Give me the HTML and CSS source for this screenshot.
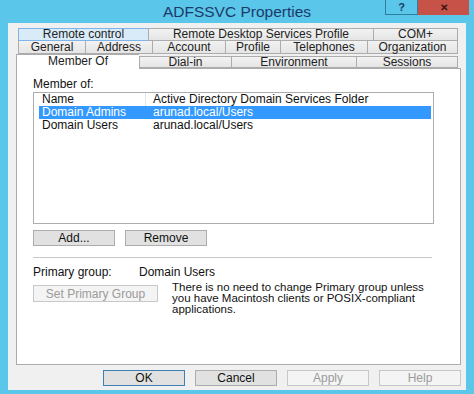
FILE: index.html
```html
<!DOCTYPE html>
<html lang="en">

<head>
  <meta charset="UTF-8">
  <title>ADFSSVC Properties</title>
  <link rel="stylesheet" href="styles.css">
</head>

<body>
  <div class="window">
    <div class="titlebar">
      <span></span>
      <h1 class="title">ADFSSVC Properties</h1>
      <div class="caption-buttons">
        <span class="cap-help">?</span>
        <span class="cap-close">&#x2715;</span>
      </div>
    </div>

    <div class="client">
      <div class="tabs">
        <div class="tab-row row1">
          <div class="tab hover">Remote control</div>
          <div class="tab">Remote Desktop Services Profile</div>
          <div class="tab">COM+</div>
        </div>
        <div class="tab-row row2">
          <div class="tab">General</div>
          <div class="tab">Address</div>
          <div class="tab">Account</div>
          <div class="tab">Profile</div>
          <div class="tab">Telephones</div>
          <div class="tab">Organization</div>
        </div>
        <div class="tab-row row3">
          <div class="tab active">Member Of</div>
          <div class="tab">Dial-in</div>
          <div class="tab">Environment</div>
          <div class="tab">Sessions</div>
        </div>
      </div>

      <div class="panel">
        <div class="label">Member of:</div>
        <div class="listview">
          <div class="lv-row lv-header">
            <div class="col-name">Name</div>
            <div class="col-folder">Active Directory Domain Services Folder</div>
          </div>
          <div class="lv-row selected">
            <div class="col-name">Domain Admins</div>
            <div class="col-folder">arunad.local/Users</div>
          </div>
          <div class="lv-row">
            <div class="col-name">Domain Users</div>
            <div class="col-folder">arunad.local/Users</div>
          </div>
        </div>

        <div class="list-buttons">
          <button class="btn">Add...</button>
          <button class="btn">Remove</button>
        </div>

        <hr class="sep">

        <div class="primary">
          <span class="primary-label">Primary group:</span>
          <span>Domain Users</span>
        </div>

        <div class="primary-set">
          <button class="btn disabled wide">Set Primary Group</button>
          <p class="note">There is no need to change Primary group unless you have Macintosh clients or POSIX-compliant applications.</p>
        </div>
      </div>

      <div class="dialog-buttons">
        <button class="btn default">OK</button>
        <button class="btn">Cancel</button>
        <button class="btn disabled">Apply</button>
        <button class="btn disabled">Help</button>
      </div>
    </div>
  </div>
</body>

</html>
```

FILE: styles.css
```css
body {
  margin: 0;
  font-family: "Liberation Sans", Arial, sans-serif;
  font-size: 12px;
  color: #111;
}

.window {
  width: 474px;
  height: 394px;
  background-color: #5ac6ea;
  display: flex;
  flex-direction: column;
  box-sizing: border-box;
}

.titlebar {
  height: 23px;
  display: grid;
  grid-template-columns: 1fr auto 1fr;
  align-items: start;
}

.title {
  margin: 0;
  padding-top: 3px;
  font-size: 15.5px;
  font-weight: normal;
  color: #1c3a68;
  line-height: 17px;
}

.caption-buttons {
  justify-self: end;
  display: flex;
  margin-right: 5px;
}

.cap-help,
.cap-close {
  height: 15px;
  display: flex;
  align-items: center;
  justify-content: center;
  font-weight: bold;
  box-sizing: border-box;
}

.cap-help {
  width: 33px;
  background-color: #5ac6ea;
  border: 1px solid #2f7ea0;
  border-top: none;
  color: #1c3a68;
  font-size: 11px;
}

.cap-close {
  width: 51px;
  background-color: #c75248;
  color: #3a1410;
  font-size: 10px;
}

.client {
  flex: 1;
  margin: 0 8px 4px 8px;
  background-color: #f0f0f0;
  display: flex;
  flex-direction: column;
  padding: 5px 0 0 0;
}

/* tabs */
.tabs {
  display: flex;
  flex-direction: column;
  padding-left: 10px;
}

.tab-row {
  display: grid;
  height: 13px;
}

.row1 {
  grid-template-columns: 130px 225px 85px;
}

.row2 {
  grid-template-columns: 67px 67px 73px 55px 87px 91px;
}

.row3 {
  grid-template-columns: 123px 92px 125px 102px;
  margin-left: -2px;
  height: 14px;
  align-items: end;
}

.tab {
  height: 13px;
  box-sizing: border-box;
  border: 1px solid #acacac;
  border-right: none;
  background: linear-gradient(#f2f2f2, #e5e5e5);
  display: flex;
  align-items: center;
  justify-content: center;
  line-height: 11px;
  color: #222;
  white-space: nowrap;
}

.tab-row .tab:last-child {
  border-right: 1px solid #acacac;
}

.row2 .tab {
  border-top: none;
  height: 13px;
}

.tab.hover {
  background: #d9ebf9;
  border-color: #7eb4ea;
}

.row3 .tab {
  height: 12px;
}

.tab.active {
  height: 15px;
  background: #fff;
  border-bottom: none;
  position: relative;
  z-index: 1;
  margin-bottom: -1px;
  align-items: flex-start;
  padding-top: 1px;
}

/* tab page */
.panel {
  margin-left: 8px;
  width: 445px;
  height: 297px;
  box-sizing: border-box;
  background-color: #fff;
  border: 1px solid #acacac;
  padding: 9px 0 0 16px;
}

.label {
  line-height: 12px;
}

.listview {
  margin-top: 2px;
  width: 401px;
  height: 132px;
  box-sizing: border-box;
  border: 1px solid #adadad;
  padding: 0 2px 0 5px;
}

.lv-row {
  display: flex;
  height: 13px;
  line-height: 13px;
  white-space: nowrap;
}

.lv-row .col-name {
  width: 107px;
  padding-left: 3px;
  box-sizing: border-box;
}

.lv-row .col-folder {
  padding-left: 7px;
}

.lv-header .col-name {
  border-right: 1px solid #e5e5e5;
}

.lv-row.selected {
  background-color: #3399ff;
  color: #fff;
}

.list-buttons {
  display: flex;
  gap: 10px;
  margin-top: 6px;
}

.btn {
  width: 82px;
  height: 16px;
  padding: 0;
  font-family: inherit;
  font-size: 12px;
  color: #111;
  background-color: #e1e1e1;
  border: 1px solid #adadad;
  border-radius: 0;
  line-height: 14px;
}

.btn.default {
  border-color: #3c7fb1;
}

.btn.disabled {
  background-color: #f4f4f4;
  border-color: #c8c8c8;
  color: #9a9a9a;
}

.btn.wide {
  width: 125px;
  height: 17px;
}

.sep {
  margin: 11px 0 0 0;
  width: 399px;
  border: none;
  border-top: 1px solid #c8c8c8;
}

.primary {
  display: flex;
  margin-top: 8px;
  line-height: 12px;
}

.primary-label {
  width: 106px;
}

.primary-set {
  display: flex;
  gap: 14px;
  margin-top: 7px;
}

.note {
  margin: -3px 0 0 0;
  width: 268px;
  font-size: 11.5px;
  line-height: 11px;
}

.dialog-buttons {
  display: flex;
  justify-content: flex-end;
  gap: 10px;
  padding: 5px 5px 0 0;
}
```
